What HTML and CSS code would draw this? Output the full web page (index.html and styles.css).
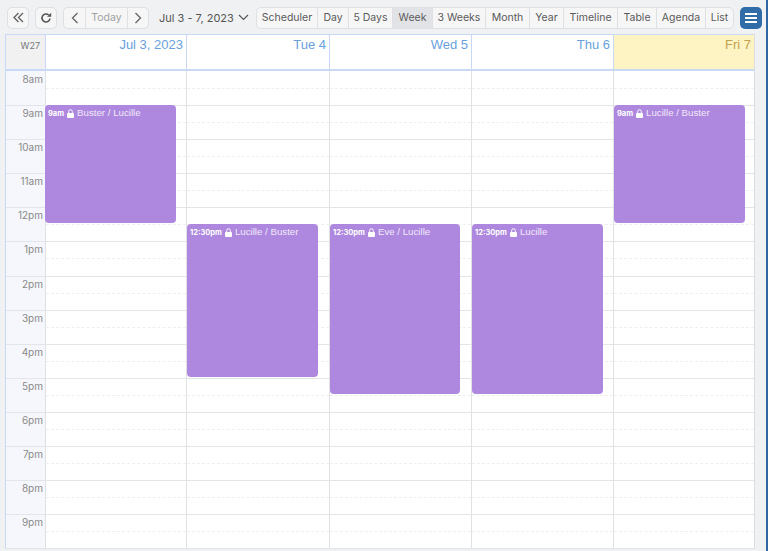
FILE: index.html
```html
<!DOCTYPE html>
<html lang="en">
<head>
    <meta charset="UTF-8">
    <meta name="viewport" content="width=device-width, initial-scale=1.0">
    <title>Calendar</title>
    <link rel="stylesheet" href="styles.css">
</head>
<body>
    <div class="toolbar">
        <button class="btn btn-single" aria-label="Collapse">
            <svg width="13" height="11" viewBox="0 0 13 11"><path d="M6.500 1 2 5.500 6.500 10M11 1 6.500 5.500 11 10" fill="none" stroke="#666" stroke-width="1.4"/></svg>
        </button>
        <button class="btn btn-single" aria-label="Refresh">
            <svg width="12" height="12" viewBox="0 0 12 12"><path d="M10 6.500A4 4 0 1 1 8.700 3" fill="none" stroke="#555" stroke-width="1.6"/><path d="M7 4.800h4.200V.8z" fill="#555"/></svg>
        </button>
        <div class="btn-group nav-group">
            <button class="btn nav-arrow" aria-label="Previous">
                <svg width="8" height="12" viewBox="0 0 8 12"><path d="M6.500 1 1.500 6l5 5" fill="none" stroke="#666" stroke-width="1.3"/></svg>
            </button>
            <button class="btn btn-today">Today</button>
            <button class="btn nav-arrow" aria-label="Next">
                <svg width="8" height="12" viewBox="0 0 8 12"><path d="M1.500 1l5 5-5 5" fill="none" stroke="#666" stroke-width="1.3"/></svg>
            </button>
        </div>
        <div class="range">
            Jul 3 - 7, 2023
            <svg width="11" height="7" viewBox="0 0 11 7"><path d="M1 1l4.500 4.500L10 1" fill="none" stroke="#555" stroke-width="1.2"/></svg>
        </div>
        <div class="btn-group views">
            <button class="btn view-scheduler">Scheduler</button>
            <button class="btn view-day">Day</button>
            <button class="btn view-5days">5 Days</button>
            <button class="btn view-week active">Week</button>
            <button class="btn view-3weeks">3 Weeks</button>
            <button class="btn view-month">Month</button>
            <button class="btn view-year">Year</button>
            <button class="btn view-timeline">Timeline</button>
            <button class="btn view-table">Table</button>
            <button class="btn view-agenda">Agenda</button>
            <button class="btn view-list">List</button>
        </div>
        <button class="btn-menu" aria-label="Menu">
            <svg width="12" height="10" viewBox="0 0 12 10"><path d="M0 1h12M0 5h12M0 9h12" stroke="#fff" stroke-width="1.8"/></svg>
        </button>
    </div>

    <div class="calendar">
        <div class="head">
            <div class="week-no">W27</div>
            <div class="day-head">Jul 3, 2023</div>
            <div class="day-head">Tue 4</div>
            <div class="day-head">Wed 5</div>
            <div class="day-head">Thu 6</div>
            <div class="day-head today">Fri 7</div>
        </div>
        <div class="grid">
            <div class="times">
                <div class="time">8am</div>
                <div class="time">9am</div>
                <div class="time">10am</div>
                <div class="time">11am</div>
                <div class="time">12pm</div>
                <div class="time">1pm</div>
                <div class="time">2pm</div>
                <div class="time">3pm</div>
                <div class="time">4pm</div>
                <div class="time">5pm</div>
                <div class="time">6pm</div>
                <div class="time">7pm</div>
                <div class="time">8pm</div>
                <div class="time">9pm</div>
            </div>
            <div class="day" id="day-1"></div>
            <div class="day" id="day-2"></div>
            <div class="day" id="day-3"></div>
            <div class="day" id="day-4"></div>
            <div class="day" id="day-5"></div>
        </div>
    </div>

    <template id="slots">
        <div class="slot"></div><div class="slot"></div><div class="slot"></div><div class="slot"></div>
        <div class="slot"></div><div class="slot"></div><div class="slot"></div><div class="slot"></div>
        <div class="slot"></div><div class="slot"></div><div class="slot"></div><div class="slot"></div>
        <div class="slot"></div><div class="slot"></div>
    </template>

    <template id="event">
        <div class="event">
            <b class="event-time"></b>
            <svg class="lock" width="7" height="9" viewBox="0 0 7 9"><path d="M1.700 4.500V2.500a1.800 1.800 0 0 1 3.600 0V4.500" fill="none" stroke="#fff" stroke-width="1"/><rect y="4" width="7" height="5" rx="1" fill="#fff"/></svg>
            <span class="event-title"></span>
        </div>
    </template>

    <script>
        // slots and events are the same markup repeated, so stamp them out
        const events = [
            { day: 1, time: '9am', title: 'Buster / Lucille', size: 'from-9am' },
            { day: 2, time: '12:30pm', title: 'Lucille / Buster', size: 'from-1230 short' },
            { day: 3, time: '12:30pm', title: 'Eve / Lucille', size: 'from-1230 long' },
            { day: 4, time: '12:30pm', title: 'Lucille', size: 'from-1230 long' },
            { day: 5, time: '9am', title: 'Lucille / Buster', size: 'from-9am' }
        ];

        const slots = document.getElementById('slots');
        const eventTemplate = document.getElementById('event');

        document.querySelectorAll('.day').forEach(day => {
            day.appendChild(slots.content.cloneNode(true));
        });

        events.forEach(ev => {
            const item = eventTemplate.content.cloneNode(true);
            item.querySelector('.event').className = 'event ' + ev.size;
            item.querySelector('.event-time').textContent = ev.time;
            item.querySelector('.event-title').textContent = ev.title;
            document.getElementById('day-' + ev.day).appendChild(item);
        });
    </script>
</body>
</html>
```

FILE: styles.css
```css
html, body {
    height: 100%;
}

body {
    margin: 0;
    overflow: hidden;
    background-color: #f0f1f3;
    border-right: 2px solid #2f67a5;
    box-sizing: border-box;
    font-family: Inter, "Liberation Sans", sans-serif;
    color: #555;
}

.toolbar {
    display: flex;
    align-items: center;
    height: 34px;
    padding: 1px 4px 0 7px;
    box-sizing: border-box;
}

.btn {
    display: flex;
    align-items: center;
    justify-content: center;
    height: 22px;
    padding: 0;
    border: 1px solid #dfe0e3;
    background-color: #f6f6f7;
    color: #5a5a5a;
    font-family: inherit;
    font-size: 10.5px;
}

.btn-single {
    width: 22px;
    margin-right: 6px;
    border-radius: 5px;
}

.btn-group {
    display: flex;
}

.btn-group .btn {
    border-right: none;
}

.btn-group .btn:first-child {
    border-radius: 5px 0 0 5px;
}

.btn-group .btn:last-child {
    border-right: 1px solid #dfe0e3;
    border-radius: 0 5px 5px 0;
}

.nav-arrow {
    width: 22px;
}

.btn-today {
    width: 42px;
    color: #a2a2a2;
}

.range {
    display: flex;
    align-items: center;
    gap: 4px;
    width: 97px;
    margin-left: 10px;
    font-size: 11px;
    white-space: nowrap;
}

.views .btn.active {
    background-color: #e2e3e6;
}

.view-scheduler { width: 61px; }
.view-day { width: 31px; }
.view-5days { width: 44px; }
.view-week { width: 40px; }
.view-3weeks { width: 53px; }
.view-month { width: 44px; }
.view-year { width: 34px; }
.view-timeline { width: 54px; }
.view-table { width: 39px; }
.view-agenda { width: 49px; }
.view-list { width: 29px; }

.btn-menu {
    display: flex;
    align-items: center;
    justify-content: center;
    width: 22px;
    height: 22px;
    margin-left: 6px;
    padding: 0;
    border: none;
    border-radius: 5px;
    background-color: #2f6ca8;
}

.calendar {
    width: 750px;
    margin-left: 5px;
    box-sizing: border-box;
    border-left: 1px solid #c9d8f5;
    border-right: 1px solid #dcdde1;
    border-bottom: 1px solid #e4e5e8;
    background-color: #fff;
}

.head {
    display: grid;
    grid-template-columns: 39px 141px 143px 142px 142px 1fr;
    height: 37px;
    box-sizing: border-box;
    border-top: 1px solid #c9d8f5;
    border-bottom: 2px solid #c9d8f5;
}

.week-no {
    padding: 5px 5px 0 0;
    background-color: #f1f1f2;
    text-align: right;
    font-size: 9px;
    color: #777;
}

.day-head {
    padding: 2px 3px 0 0;
    border-left: 1px solid #c9d8f5;
    text-align: right;
    font-family: "Liberation Sans", sans-serif;
    font-size: 13px;
    color: #6a9fdc;
}

.day-head.today {
    background-color: #fdf3c3;
    color: #c2a24f;
}

.grid {
    display: grid;
    grid-template-columns: 39px 141px 143px 142px 142px 1fr;
}

.times {
    background-color: #f5f7fc;
}

.time {
    height: 34.1px;
    padding: 1px 2px 0 0;
    box-sizing: border-box;
    border-top: 1px solid #e4e5e8;
    text-align: right;
    font-size: 10px;
    color: #8a8a8a;
}

.time:first-child {
    border-top-color: transparent;
}

.day {
    position: relative;
    border-left: 1px solid #e0e1e4;
}

.slot {
    position: relative;
    height: 34.1px;
    box-sizing: border-box;
    border-top: 1px solid #e4e5e8;
}

.slot:first-child {
    border-top-color: transparent;
}

.slot::after {
    content: "";
    position: absolute;
    left: 0;
    right: 0;
    top: 16px;
    border-top: 1px dashed #efeff1;
}

.event {
    position: absolute;
    left: 0;
    width: 131px;
    display: flex;
    align-items: flex-start;
    gap: 3px;
    padding: 2px 3px;
    box-sizing: border-box;
    border-radius: 4px;
    background-color: #ae88de;
    color: #fff;
    white-space: nowrap;
}

#day-1 .event {
    left: -1px;
}

#day-3 .event {
    width: 130px;
}

.from-9am {
    top: 34px;
    height: 118px;
}

.from-1230 {
    top: 153px;
}

.from-1230.short {
    height: 153px;
}

.from-1230.long {
    height: 170px;
}

.event-time {
    margin-top: 1px;
    font-size: 7.5px;
    line-height: 11px;
}

.lock {
    margin-top: 2px;
    flex: none;
}

.event-title {
    font-family: "Liberation Sans", sans-serif;
    font-size: 9.7px;
    line-height: 12px;
    color: #f1e9fb;
}
```
